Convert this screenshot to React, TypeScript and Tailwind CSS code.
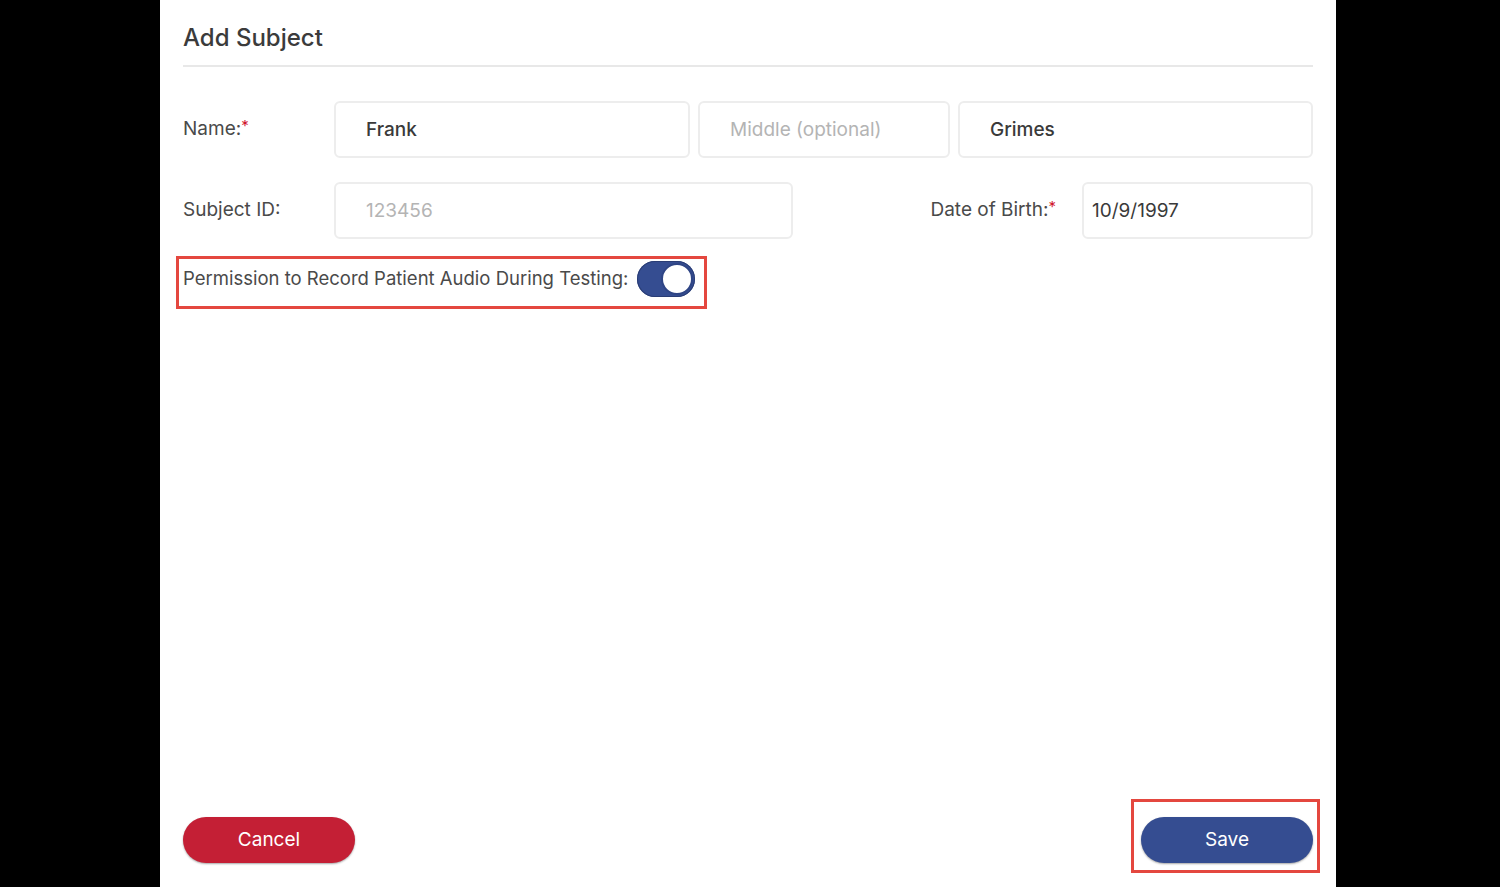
const font = { fontFamily: 'Inter, "Noto Sans", sans-serif' }

function Field({ value, placeholder, className = '', pad = 'pl-[30px]', bold = false }: { value?: string; placeholder?: string; className?: string; pad?: string; bold?: boolean }) {
  return (
    <input
      readOnly
      defaultValue={value}
      placeholder={placeholder}
      className={`h-[57px] rounded-md border-2 border-[#ededed] bg-white ${pad} text-[19px] text-[#3a3a3a] placeholder:text-[#b4b4b4] outline-none ${bold ? 'font-medium' : ''} ${className}`}
    />
  )
}

export default function App() {
  return (
    <div className="min-h-screen w-full bg-black" style={font}>
      <div className="ml-[160px] w-[1176px] h-[887px] bg-white flex flex-col px-[23px]">
        {/* Header */}
        <div className="pt-[23px] pb-[12px] border-b-2 border-[#e8e8e8]">
          <h1 className="text-[24px] leading-[30px] font-medium text-[#3b3b3b]">Add Subject</h1>
        </div>

        {/* Name */}
        <div className="mt-[34px] flex items-center">
          <div className="w-[151px] text-[19px] text-[#4a4a4a]">
            Name:<span className="text-[#d0172e] align-top text-[15px]">*</span>
          </div>
          <div className="flex-1 flex gap-[8px]">
            <Field value="Frank" className="w-[356px]" bold />
            <Field placeholder="Middle (optional)" className="w-[252px]" />
            <Field value="Grimes" className="flex-1 min-w-0" bold />
          </div>
        </div>

        {/* Subject ID / DOB */}
        <div className="mt-[24px] flex items-center">
          <div className="w-[151px] text-[19px] text-[#4a4a4a]">Subject ID:</div>
          <Field placeholder="123456" className="w-[459px]" />
          <div className="flex-1 flex justify-end pr-[26px] text-[19px] text-[#4a4a4a]">
            Date of Birth:<span className="text-[#d0172e] align-top text-[15px]">*</span>
          </div>
          <Field value="10/9/1997" className="w-[231px]" pad="pl-[8px]" />
        </div>

        {/* Permission */}
        <div className="mt-[17px] self-start -ml-[7px] inline-flex items-center gap-[9px] border-[3px] border-[#e4473f] pl-[4px] pr-[9px] pt-[2px] pb-[9px]">
          <span className="text-[18.5px] text-[#4a4a4a]">Permission to Record Patient Audio During Testing:</span>
          <div className="w-[58px] h-[36px] rounded-full bg-[#354d91] flex items-center justify-end p-[2px] shadow-[inset_0_0_0_1px_#2a3d75]">
            <div className="w-[32px] h-[32px] rounded-full bg-white border-2 border-[#2f4585]" />
          </div>
        </div>

        <div className="flex-1" />

        {/* Footer */}
        <div className="flex items-end justify-between pb-[14px]">
          <button className="mb-[10px] w-[172px] h-[46px] rounded-full bg-[#c41f35] text-white text-[19px] shadow-[0_1px_2px_rgba(0,0,0,0.35)]">
            Cancel
          </button>
          <div className="-mr-[7px] border-[3px] border-[#e4473f] pl-[7px] pr-[4px] pt-[15px] pb-[7px]">
            <button className="w-[172px] h-[46px] rounded-full bg-[#354d91] text-white text-[19px] shadow-[0_1px_2px_rgba(0,0,0,0.35)]">
              Save
            </button>
          </div>
        </div>
      </div>
    </div>
  )
}
